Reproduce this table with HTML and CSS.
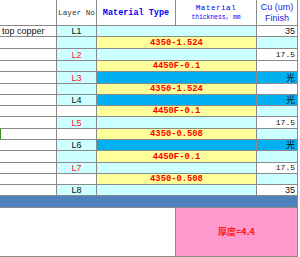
FILE: index.html
```html
<!DOCTYPE html>
<html>
<head>
<meta charset="utf-8">
<link rel="stylesheet" href="styles.css">
</head>
<body>
<div class="sheet">
  <div class="cell w"></div>
  <div class="cell w hd-layer">Layer No</div>
  <div class="cell w hd-type">Material Type</div>
  <div class="cell w hd-thick"><span class="l1">Material</span><span class="l2">thickness, mm</span></div>
  <div class="cell w hd-cu"><span>Cu (um)</span><span>Finish</span></div>

  <div class="cell w name">top copper</div><div class="cell c layer">L1</div><div class="cell c mat"></div><div class="cell w num">35</div>
  <div class="cell w"></div><div class="cell c"></div><div class="cell y mat">4350-1.524</div><div class="cell c"></div>
  <div class="cell w"></div><div class="cell c layer red">L2</div><div class="cell c mat"></div><div class="cell w num mono">17.5</div>
  <div class="cell w"></div><div class="cell c"></div><div class="cell y mat">4450F-0.1</div><div class="cell w"></div>
  <div class="cell w"></div><div class="cell c layer red">L3</div><div class="cell b mat"></div><div class="cell b num cjk">光</div>
  <div class="cell w"></div><div class="cell c"></div><div class="cell y mat">4350-1.524</div><div class="cell w"></div>
  <div class="cell w"></div><div class="cell c layer">L4</div><div class="cell b mat"></div><div class="cell b num cjk">光</div>
  <div class="cell w"></div><div class="cell w"></div><div class="cell y mat">4450F-0.1</div><div class="cell c"></div>
  <div class="cell w"></div><div class="cell c layer red">L5</div><div class="cell c mat"></div><div class="cell w num mono">17.5</div>
  <div class="cell w mark"></div><div class="cell w"></div><div class="cell y mat">4350-0.508</div><div class="cell c"></div>
  <div class="cell w"></div><div class="cell c layer">L6</div><div class="cell b mat"></div><div class="cell b num cjk">光</div>
  <div class="cell w"></div><div class="cell c"></div><div class="cell y mat">4450F-0.1</div><div class="cell c"></div>
  <div class="cell w"></div><div class="cell c layer red">L7</div><div class="cell c mat"></div><div class="cell w num mono">17.5</div>
  <div class="cell w"></div><div class="cell w"></div><div class="cell y mat">4350-0.508</div><div class="cell c"></div>
  <div class="cell w"></div><div class="cell c layer">L8</div><div class="cell c mat"></div><div class="cell w num">35</div>

  <div class="cell bar"></div>
  <div class="cell w blank"></div>
  <div class="cell total">厚度=4.4</div>
</div>
</body>
</html>
```

FILE: styles.css
```css
html, body {
  margin: 0;
  padding: 0;
  background: #ffffff;
}
.sheet {
  display: grid;
  grid-template-columns: 56px 39px 78px 80px 40px;
  grid-template-rows: 25px 10px 11px 11px 10px 11px 10px 10px 10px 11px 10px 10px 11px 10px 10px 10px 11px 48px;
  gap: 1px;
  width: 297px;
  padding: 0 1px 1px 0;
  background: #8a8a8a;
}
.cell {
  display: flex;
  align-items: flex-end;
  overflow: visible;
  white-space: nowrap;
  font-family: "Liberation Sans", Arial, sans-serif;
  font-size: 9px;
  line-height: 10px;
  color: #111;
}
.w { background: #ffffff; }
.c { background: #ccffff; }
.y { background: #ffff99; }
.b { background: #00b0f0; }

.hd-layer {
  justify-content: center;
  align-items: center;
  font-family: "Liberation Mono", monospace;
  font-size: 7.7px;
  color: #333;
}
.hd-type {
  justify-content: center;
  align-items: center;
  font-family: "Liberation Mono", monospace;
  font-size: 8.5px;
  font-weight: bold;
  color: #0000ff;
}
.hd-thick {
  flex-direction: column;
  justify-content: center;
  align-items: center;
  font-family: "Liberation Mono", monospace;
  color: #0000ff;
  padding-top: 1px;
}
.hd-thick .l1 { font-size: 7.6px; letter-spacing: 0.5px; line-height: 10px; }
.hd-thick .l2 { font-size: 6.3px; line-height: 10px; }
.hd-cu {
  flex-direction: column;
  justify-content: center;
  align-items: center;
  color: #2020e0;
  font-size: 9px;
  line-height: 11px;
}
.name { padding-left: 2px; }
.layer { justify-content: center; }
.red { color: #ff2020; }
.mat {
  grid-column: span 2;
  justify-content: center;
  align-items: center;
  font-family: "Liberation Mono", monospace;
  font-size: 8.8px;
  font-weight: bold;
  color: #ff0000;
}
.num { justify-content: flex-end; padding-right: 2px; }
.mono { font-family: "Liberation Mono", monospace; font-size: 8px; }
.cjk { font-family: "Noto Sans CJK SC", sans-serif; font-size: 9px; line-height: 10px; }
.mark { box-shadow: inset 1px 0 0 #3a8a20; }
.bar { grid-column: 1 / -1; background: #4f81bd; }
.blank { grid-column: span 3; }
.total {
  grid-column: span 2;
  background: #ff99cc;
  justify-content: center;
  align-items: center;
  font-family: "Noto Sans CJK SC", sans-serif;
  font-weight: bold;
  font-size: 9px;
  color: #ff2020;
}
```
